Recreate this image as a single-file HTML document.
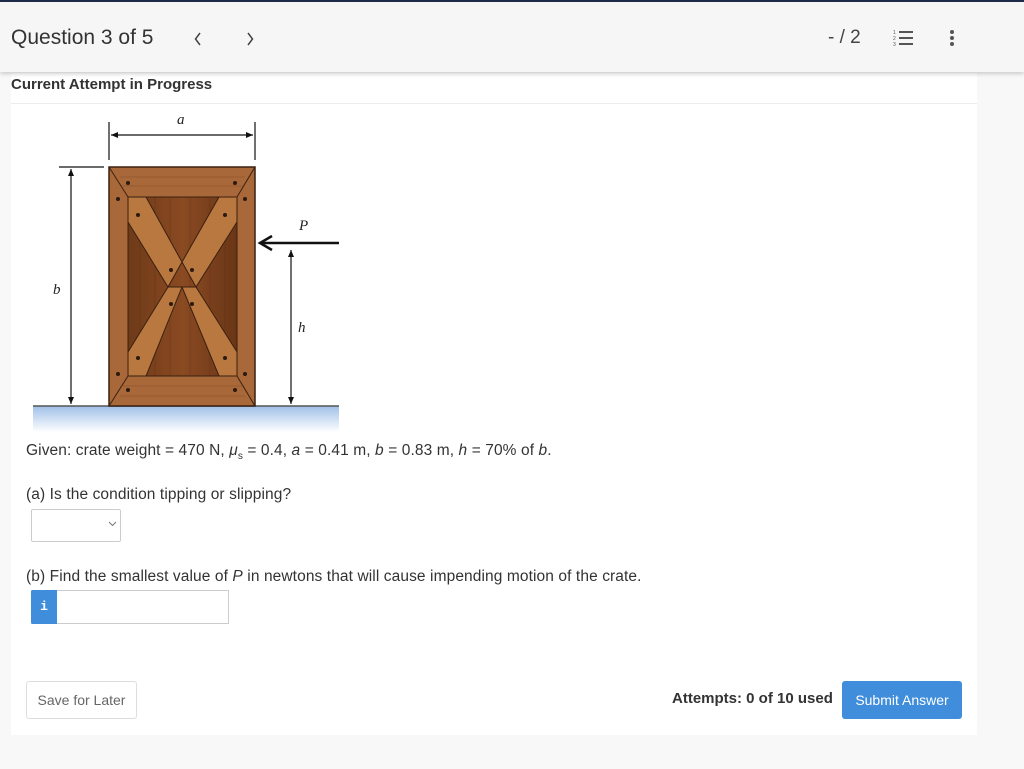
<!DOCTYPE html>
<html><head><meta charset="utf-8"><style>
*{margin:0;padding:0;box-sizing:border-box}
body{width:1024px;height:769px;background:#f8f8f8;font-family:"Liberation Sans",sans-serif;color:#333;position:relative;overflow:hidden}
.hdr{position:absolute;left:0;top:0;width:1024px;height:72px;background:#f6f6f6;border-top:2px solid #1e2a4a;box-shadow:0 2px 4px rgba(0,0,0,.18);z-index:2}
.card{position:absolute;left:11px;top:73px;width:966px;height:662px;background:#fff}
.t{position:absolute;white-space:nowrap}
.q{font-size:15.5px;letter-spacing:0.1px;color:#333}
</style></head><body>
<div class="hdr">
<div class="t" style="left:11px;top:24px;font-size:21px;color:#333">Question 3 of 5</div>
<svg style="position:absolute;left:194px;top:30px" width="8" height="14"><polyline points="6,1 1.5,7 6,13" stroke="#444" stroke-width="1.5" fill="none"/></svg>
<svg style="position:absolute;left:246px;top:30px" width="8" height="14"><polyline points="2,1 6.5,7 2,13" stroke="#444" stroke-width="1.5" fill="none"/></svg>
<div class="t" style="left:828px;top:25px;font-size:19px;color:#444">- / 2</div>
<svg style="position:absolute;left:893px;top:27px" width="22" height="18" viewBox="0 0 22 18"><g fill="#555" font-size="5" font-family="Liberation Sans"><text x="0" y="5">1</text><text x="0" y="11">2</text><text x="0" y="17">3</text></g><rect x="6" y="2" width="14" height="2" fill="#555"/><rect x="6" y="8" width="14" height="2" fill="#555"/><rect x="6" y="14" width="14" height="2" fill="#555"/></svg>
<svg style="position:absolute;left:949px;top:27px" width="6" height="20"><circle cx="3" cy="3" r="2" fill="#555"/><circle cx="3" cy="9" r="2" fill="#555"/><circle cx="3" cy="15" r="2" fill="#555"/></svg>
</div>
<div class="card">
<div style="position:absolute;left:0;top:30px;width:966px;border-top:1px solid #ececec"></div>
</div>
<div class="t" style="left:11px;top:76px;font-size:15px;font-weight:bold;color:#333">Current Attempt in Progress</div>
<svg style="position:absolute;left:20px;top:110px" width="330" height="325" viewBox="20 110 330 325">
<defs>
<linearGradient id="g" x1="0" y1="0" x2="0" y2="1"><stop offset="0" stop-color="#9fc0e8"/><stop offset="1" stop-color="#fff"/></linearGradient>
<linearGradient id="w" x1="0" y1="0" x2="1" y2="0"><stop offset="0" stop-color="#6e3a18"/><stop offset=".5" stop-color="#8a4a22"/><stop offset="1" stop-color="#6a3616"/></linearGradient>
</defs>
<rect x="33" y="406" width="306" height="26" fill="url(#g)"/>
<line x1="33" y1="406" x2="339" y2="406" stroke="#555" stroke-width="1.5"/>
<g stroke="#111" stroke-width="1.2" fill="none">
<line x1="109" y1="122" x2="109" y2="160"/><line x1="255" y1="122" x2="255" y2="160"/>
<line x1="111" y1="135" x2="253" y2="135"/>
<line x1="59" y1="167" x2="104" y2="167"/><line x1="71" y1="169" x2="71" y2="404"/>
<line x1="291" y1="250" x2="291" y2="404"/>
<line x1="262" y1="243" x2="339" y2="243" stroke-width="2.5"/>
<polyline points="272,236 260,243 272,250" stroke-width="2.5"/>
</g>
<g fill="#111"><polygon points="111,135 118,132 118,138"/><polygon points="253,135 246,132 246,138"/>
<polygon points="71,169 68,176 74,176"/><polygon points="71,404 68,397 74,397"/>
<polygon points="291,250 288,257 294,257"/><polygon points="291,404 288,397 294,397"/></g>
<rect x="109" y="167" width="146" height="239" fill="#a8683a" stroke="#3a2010" stroke-width="1.5"/>
<rect x="128" y="197" width="109" height="179" fill="url(#w)" stroke="#3a2010"/>
<g stroke="#5a2e12" stroke-width="0.6" opacity=".6">
<line x1="140" y1="197" x2="140" y2="376"/><line x1="155" y1="197" x2="155" y2="376"/><line x1="170" y1="197" x2="170" y2="376"/><line x1="190" y1="197" x2="190" y2="376"/><line x1="210" y1="197" x2="210" y2="376"/><line x1="225" y1="197" x2="225" y2="376"/></g>
<g fill="#b0703f" stroke="#3a2010" stroke-width="1">
<polygon points="128,197 146,197 182,262 168,287 128,222" fill="#b8783f"/>
<polygon points="237,197 219,197 182,262 196,287 237,222" fill="#b8783f"/>
<polygon points="128,376 146,376 182,287 168,287 128,352" fill="#b8783f"/>
<polygon points="237,376 219,376 182,287 196,287 237,352" fill="#b8783f"/>
</g>
<g stroke="#3a2010" stroke-width="1" fill="none">
<line x1="109" y1="167" x2="128" y2="197"/><line x1="255" y1="167" x2="237" y2="197"/>
<line x1="109" y1="406" x2="128" y2="376"/><line x1="255" y1="406" x2="237" y2="376"/></g>
<g stroke="#7a4420" stroke-width="0.6" opacity=".7">
<line x1="120" y1="177" x2="245" y2="177"/><line x1="120" y1="186" x2="245" y2="186"/><line x1="120" y1="386" x2="245" y2="386"/><line x1="120" y1="396" x2="245" y2="396"/></g>
<g fill="#2a1a10"><circle cx="128" cy="183" r="2"/><circle cx="235" cy="183" r="2"/><circle cx="118" cy="199" r="2"/><circle cx="245" cy="199" r="2"/><circle cx="138" cy="215" r="2"/><circle cx="225" cy="215" r="2"/><circle cx="171" cy="270" r="2"/><circle cx="192" cy="270" r="2"/><circle cx="171" cy="304" r="2"/><circle cx="192" cy="304" r="2"/><circle cx="138" cy="358" r="2"/><circle cx="225" cy="358" r="2"/><circle cx="118" cy="374" r="2"/><circle cx="245" cy="374" r="2"/><circle cx="128" cy="390" r="2"/><circle cx="235" cy="390" r="2"/></g>
<g font-family="Liberation Serif" font-style="italic" font-size="15" fill="#222">
<text x="177" y="124">a</text><text x="53" y="294">b</text><text x="299" y="230">P</text><text x="298" y="332">h</text></g>
</svg>
<div class="t q" style="left:26px;top:442px">Given: crate weight = 470 N, <i>μ</i><sub style="font-size:10px">s</sub> = 0.4, <i>a</i> = 0.41 m, <i>b</i> = 0.83 m, <i>h</i> = 70% of <i>b</i>.</div>
<div class="t q" style="left:26px;top:486px">(a) Is the condition tipping or slipping?</div>
<div style="position:absolute;left:31px;top:509px;width:90px;height:33px;border:1px solid #ccc;border-radius:2px;background:#fff"></div>
<svg style="position:absolute;left:108px;top:521px" width="9" height="6"><polyline points="1,1 4.5,4.5 8,1" stroke="#777" fill="none"/></svg>
<div class="t q" style="left:26px;top:568px">(b) Find the smallest value of <i>P</i> in newtons that will cause impending motion of the crate.</div>
<div style="position:absolute;left:31px;top:590px;width:198px;height:34px;border:1px solid #ccc;background:#fff"></div>
<div style="position:absolute;left:31px;top:590px;width:26px;height:34px;background:#3f8ddb;border-radius:2px 0 0 2px;color:#fff;font-family:'Liberation Mono',monospace;font-weight:bold;font-size:13px;text-align:center;line-height:34px">i</div>
<div style="position:absolute;left:26px;top:681px;width:111px;height:38px;border:1px solid #ddd;border-radius:3px;background:#fff;color:#666;font-size:14px;text-align:center;line-height:36px">Save for Later</div>
<div class="t" style="left:672px;top:690px;font-size:15px;font-weight:bold;color:#333">Attempts: 0 of 10 used</div>
<div style="position:absolute;left:842px;top:681px;width:120px;height:38px;background:#3f8ddb;border-radius:3px;color:#fff;font-size:14px;text-align:center;line-height:38px">Submit Answer</div>
</body></html>
